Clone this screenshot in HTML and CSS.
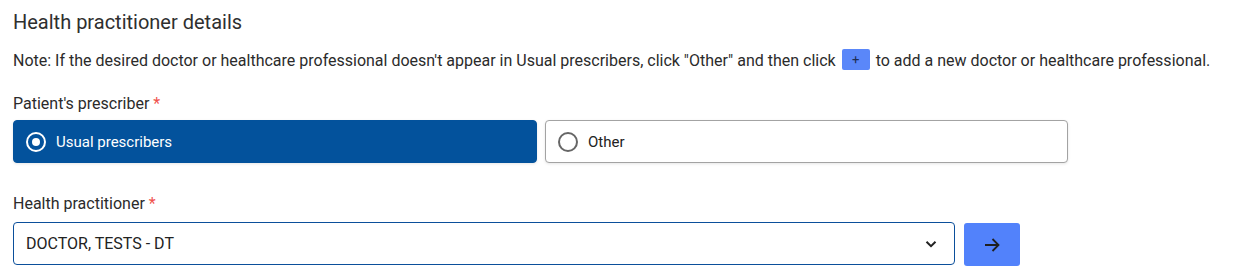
FILE: index.html
```html
<!DOCTYPE html>
<html>
<head>
<meta charset="utf-8">
<link rel="stylesheet" href="styles.css">
</head>
<body>
<section class="panel">
  <h2 class="title">Health practitioner details</h2>
  <p class="note">Note: If the desired doctor or healthcare professional doesn't appear in Usual prescribers, click "Other" and then click <span class="mini-btn">+</span> to add a new doctor or healthcare professional.</p>

  <div class="label">Patient's prescriber <span class="req">*</span></div>
  <div class="choices">
    <label class="choice selected">
      <span class="radio"><span class="dot"></span></span>
      <span class="choice-text">Usual prescribers</span>
    </label>
    <label class="choice">
      <span class="radio"></span>
      <span class="choice-text">Other</span>
    </label>
  </div>

  <div class="label label-2">Health practitioner <span class="req">*</span></div>
  <div class="select-row">
    <div class="select">
      <span class="select-value">DOCTOR, TESTS - DT</span>
      <svg class="chevron" width="14" height="14" viewBox="0 0 14 14"><path d="M2.5 4.8 L7 9.2 L11.5 4.8" fill="none" stroke="#222" stroke-width="2"/></svg>
    </div>
    <button class="go-btn" type="button">
      <svg width="18" height="18" viewBox="0 0 18 18"><path d="M2 9 H15.5 M9.5 3 L15.5 9 L9.5 15" fill="none" stroke="#1f1f1f" stroke-width="1.8"/></svg>
    </button>
  </div>
</section>
</body>
</html>
```
FILE: styles.css
```css
html, body {
  margin: 0;
  padding: 0;
  background: #ffffff;
}
body {
  font-family: Roboto, "Liberation Sans", Arial, sans-serif;
  color: #2b2b2b;
}
.panel {
  padding: 10px 0 0 13px;
  width: 1055px;
}
.title {
  margin: 0;
  font-size: 20px;
  line-height: 24px;
  font-weight: 400;
  color: #2f2f2f;
}
.note {
  margin: 15px 0 0 0;
  font-size: 16px;
  line-height: 24px;
  color: #2b2b2b;
  white-space: nowrap;
}
.mini-btn {
  display: inline-block;
  width: 28px;
  height: 21px;
  line-height: 21px;
  margin: 0 2px;
  border-radius: 2px;
  background: #5a87f9;
  color: #1e2d55;
  font-size: 13px;
  text-align: center;
  vertical-align: top;
}
.label {
  margin-top: 21px;
  font-size: 16px;
  line-height: 20px;
  color: #2b2b2b;
}
.label-2 {
  margin-top: 31px;
}
.req {
  color: #f0524d;
}
.choices {
  display: grid;
  grid-template-columns: 524px 523px;
  column-gap: 8px;
  margin-top: 6px;
}
.choice {
  box-sizing: border-box;
  height: 43px;
  display: flex;
  align-items: center;
  gap: 10px;
  padding-left: 12px;
  border: 1px solid #a3a3a3;
  border-radius: 4px;
  background: #fff;
  box-shadow: 0 1px 3px rgba(0,0,0,0.10);
  font-size: 15px;
  color: #222;
}
.choice.selected {
  background: #03529c;
  border-color: #03529c;
  color: #ffffff;
}
.radio {
  box-sizing: border-box;
  width: 20px;
  height: 20px;
  border-radius: 50%;
  border: 2px solid #666;
  display: flex;
  align-items: center;
  justify-content: center;
}
.choice.selected .radio {
  border-color: #ffffff;
}
.dot {
  width: 8px;
  height: 8px;
  border-radius: 50%;
  background: #ffffff;
}
.select-row {
  display: flex;
  gap: 9px;
  margin-top: 8px;
}
.select {
  box-sizing: border-box;
  width: 942px;
  height: 43px;
  border: 1px solid #0b4f9b;
  border-radius: 4px;
  display: flex;
  align-items: center;
  justify-content: space-between;
  padding: 0 16px 0 12px;
  font-size: 16px;
  color: #222;
}
.chevron {
  display: block;
}
.go-btn {
  box-sizing: border-box;
  width: 56px;
  height: 43px;
  margin-top: 1px;
  border: none;
  border-radius: 3px;
  background: #5282fb;
  display: flex;
  align-items: center;
  justify-content: center;
  padding: 0;
}
.go-btn svg {
  display: block;
}
```
